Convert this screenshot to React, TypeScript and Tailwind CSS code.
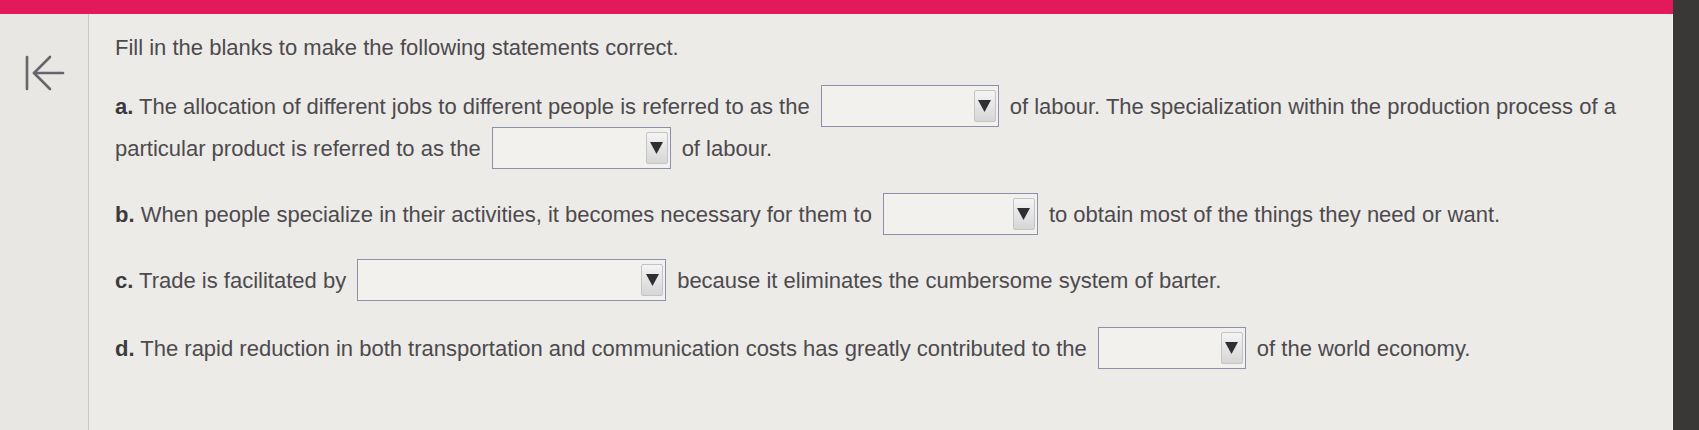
import React from "react";

function Drop({ w }: { w: number }) {
  return (
    <span
      className="inline-flex items-center justify-end h-[42px] border-[1.5px] border-[#8d90ad] bg-[#f2f1ee] pr-[2px] shrink-0 mx-[11px]"
      style={{ width: w }}
    >
      <span className="flex items-center justify-center w-[22px] h-[32px] border border-[#c4c4c4] bg-gradient-to-b from-[#f4f4f4] to-[#d6d6d6] rounded-[2px]">
        <svg width="13" height="14" viewBox="0 0 13 14">
          <polygon points="0,1 13,1 6.5,13" fill="#2f2f33" />
        </svg>
      </span>
    </span>
  );
}

function Line({ children, className = "" }: { children: React.ReactNode; className?: string }) {
  return <div className={"flex items-center h-[42px] whitespace-nowrap " + className}>{children}</div>;
}

export default function App() {
  return (
    <div
      className="w-[1699px] h-[430px] flex flex-col bg-[#3a3836] overflow-hidden"
      style={{ fontFamily: '"Liberation Sans", Arial, sans-serif' }}
    >
      <div className="h-[14px] w-[1673px] bg-[#e4195b] shrink-0" />
      <div className="flex flex-1 w-[1673px] border-r border-[#f4f4f2]">
        <div className="w-[89px] shrink-0 bg-[#e8e7e3] border-r-[1.5px] border-[#c9c8c5] pt-[41px] pl-[25px]">
          <svg width="40" height="36" viewBox="0 0 40 36" fill="none" stroke="#66656b" strokeWidth="2.6" strokeLinecap="round" strokeLinejoin="round">
            <line x1="2" y1="2" x2="2" y2="34" />
            <line x1="9" y1="18" x2="38" y2="18" />
            <polyline points="25,2 9,18 25,34" />
          </svg>
        </div>
        <div className="flex-1 bg-[#ecebe8] pl-[26px] pt-[17px] text-[22px] text-[#4d4a4e]">
          <div className="h-[32px] flex items-center whitespace-nowrap">Fill in the blanks to make the following statements correct.</div>
          <div className="mt-[22px]">
            <Line>
              <span><b className="text-[#3c3a3d]">a.</b> The allocation of different jobs to different people is referred to as the</span>
              <Drop w={178} />
              <span>of labour. The specialization within the production process of a</span>
            </Line>
            <Line>
              <span>particular product is referred to as the</span>
              <Drop w={179} />
              <span>of labour.</span>
            </Line>
          </div>
          <Line className="mt-[24px]">
            <span><b className="text-[#3c3a3d]">b.</b> When people specialize in their activities, it becomes necessary for them to</span>
            <Drop w={155} />
            <span>to obtain most of the things they need or want.</span>
          </Line>
          <Line className="mt-[24px]">
            <span><b className="text-[#3c3a3d]">c.</b> Trade is facilitated by</span>
            <Drop w={309} />
            <span>because it eliminates the cumbersome system of barter.</span>
          </Line>
          <Line className="mt-[26px]">
            <span><b className="text-[#3c3a3d]">d.</b> The rapid reduction in both transportation and communication costs has greatly contributed to the</span>
            <Drop w={148} />
            <span>of the world economy.</span>
          </Line>
        </div>
      </div>
    </div>
  );
}
